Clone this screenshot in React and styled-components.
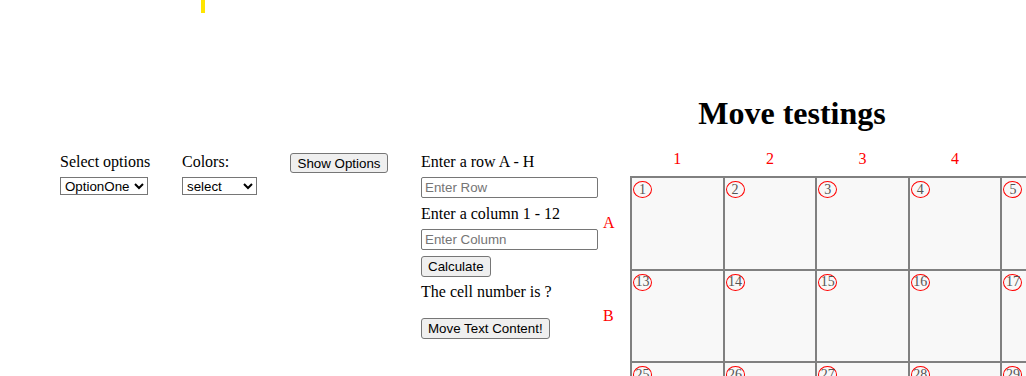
import React from 'react'
import styled, { createGlobalStyle } from 'styled-components'

// only the part of the 8 x 12 board that fits in the window is drawn
const ROWS = ['A', 'B', 'C']
const COLS = [1, 2, 3, 4, 5]
const PER_ROW = 12
const CELL = 92.6

function App() {
    return (
        <Page>
            <GlobalStyle />
            <Marker />
            <Title>Move testings</Title>
            <Main>
                <Field $width={122}>
                    <Label>Select options</Label>
                    <Select $width={88} defaultValue='one'>
                        <option value='one'>OptionOne</option>
                        <option value='two'>OptionTwo</option>
                    </Select>
                </Field>
                <Field $width={108}>
                    <Label>Colors:</Label>
                    <Select $width={75} defaultValue=''>
                        <option value=''>select</option>
                        <option value='red'>Red</option>
                        <option value='yellow'>Yellow</option>
                    </Select>
                </Field>
                <ShowButton>Show Options</ShowButton>
                <Calc>
                    <Label>Enter a row A - H</Label>
                    <Input placeholder='Enter Row' />
                    <Label $top={7}>Enter a column 1 - 12</Label>
                    <Input placeholder='Enter Column' />
                    <Button $top={6}>Calculate</Button>
                    <Label $top={6}>The cell number is ?</Label>
                    <Button $top={17}>Move Text Content!</Button>
                </Calc>
                <Board>
                    <HeaderRow>
                        {COLS.slice(0, 4).map(c => <ColHead key={c}>{c}</ColHead>)}
                    </HeaderRow>
                    <BoardBody>
                        <RowLabels>
                            {ROWS.slice(0, 2).map(r => <RowHead key={r}>{r}</RowHead>)}
                        </RowLabels>
                        <Grid>
                            {ROWS.map((r, i) => COLS.map(c => (
                                <Cell key={r + c}>
                                    <Num>{i * PER_ROW + c}</Num>
                                </Cell>
                            )))}
                        </Grid>
                    </BoardBody>
                </Board>
            </Main>
        </Page>
    )
}

export default App

const GlobalStyle = createGlobalStyle`
html, body {
  margin: 0;
  overflow: hidden;
  background: #fff;
}
body {
  font-family: "Liberation Serif", "Times New Roman", serif;
  font-size: 16px;
  color: #000;
}
`
const Page = styled.div`
  width: 1026px;
  height: 376px;
  overflow: hidden;
`
const Marker = styled.div`
  margin-left: 201px;
  width: 4px;
  height: 13px;
  background: #ffe500;
`
const Title = styled.h1`
  margin: 82px 0 0 603px;
  width: 378px;
  text-align: center;
  font-size: 32px;
  font-weight: bold;
  line-height: 37px;
`
const Main = styled.div`
  display: flex;
  align-items: flex-start;
  margin-top: 18px;
  padding-left: 60px;
  & > * {
    flex-shrink: 0;
  }
`
const Field = styled.div`
  display: flex;
  flex-direction: column;
  align-items: flex-start;
  width: ${p => p.$width}px;
  margin-top: 3px;
`
const Label = styled.div`
  line-height: 18px;
  height: 18px;
  margin-top: ${p => p.$top || 0}px;
  white-space: nowrap;
`
const Select = styled.select`
  margin-top: 6px;
  width: ${p => p.$width}px;
  height: 18px;
  box-sizing: border-box;
  font-family: "Liberation Sans", Arial, sans-serif;
  font-size: 13.33px;
  color: #000;
  background: #fff;
  border: 1px solid #767676;
  border-radius: 0;
  padding: 0;
`
const Button = styled.button`
  margin-top: ${p => p.$top || 0}px;
  height: 21px;
  box-sizing: border-box;
  padding: 1px 6px;
  font-family: "Liberation Sans", Arial, sans-serif;
  font-size: 13.33px;
  color: #000;
  background: #efefef;
  border: 1px solid #767676;
  border-radius: 3px;
  white-space: nowrap;
`
const ShowButton = styled(Button)`
  margin-top: 3px;
  width: 98px;
  height: 20px;
  margin-right: 33px;
  padding: 0 6px;
`
const Calc = styled.div`
  display: flex;
  flex-direction: column;
  align-items: flex-start;
  width: 182px;
  margin-top: 3px;
`
const Input = styled.input`
  margin-top: 6px;
  width: 177px;
  height: 21px;
  box-sizing: border-box;
  padding: 1px 3px;
  font-family: "Liberation Sans", Arial, sans-serif;
  font-size: 13.33px;
  border: 1px solid #767676;
  border-radius: 2px;
  &::placeholder {
    color: #757575;
  }
`
const Board = styled.div`
  display: flex;
  flex-direction: column;
`
const HeaderRow = styled.div`
  display: flex;
  height: 26px;
  padding-left: 28px;
`
const ColHead = styled.div`
  width: ${CELL}px;
  flex-shrink: 0;
  text-align: center;
  line-height: 18px;
  color: #ff0000;
`
const BoardBody = styled.div`
  display: flex;
`
const RowLabels = styled.div`
  width: 27px;
  padding-top: 1px;
  flex-shrink: 0;
`
const RowHead = styled.div`
  height: ${CELL}px;
  display: flex;
  align-items: center;
  color: #ff0000;
`
const Grid = styled.div`
  display: grid;
  grid-template-columns: repeat(${COLS.length}, ${CELL}px);
  grid-auto-rows: ${CELL}px;
  border: 1px solid #808080;
  border-right: 0;
  flex-shrink: 0;
`
const Cell = styled.div`
  box-sizing: border-box;
  border: 1px solid #808080;
  background: #f8f8f8;
  padding: 3px 1px;
`
const Num = styled.div`
  width: 19px;
  height: 17px;
  box-sizing: border-box;
  border: 1px solid #ff0000;
  border-radius: 50%;
  display: flex;
  align-items: center;
  justify-content: center;
  font-size: 14px;
  color: #555;
  line-height: 1;
`
